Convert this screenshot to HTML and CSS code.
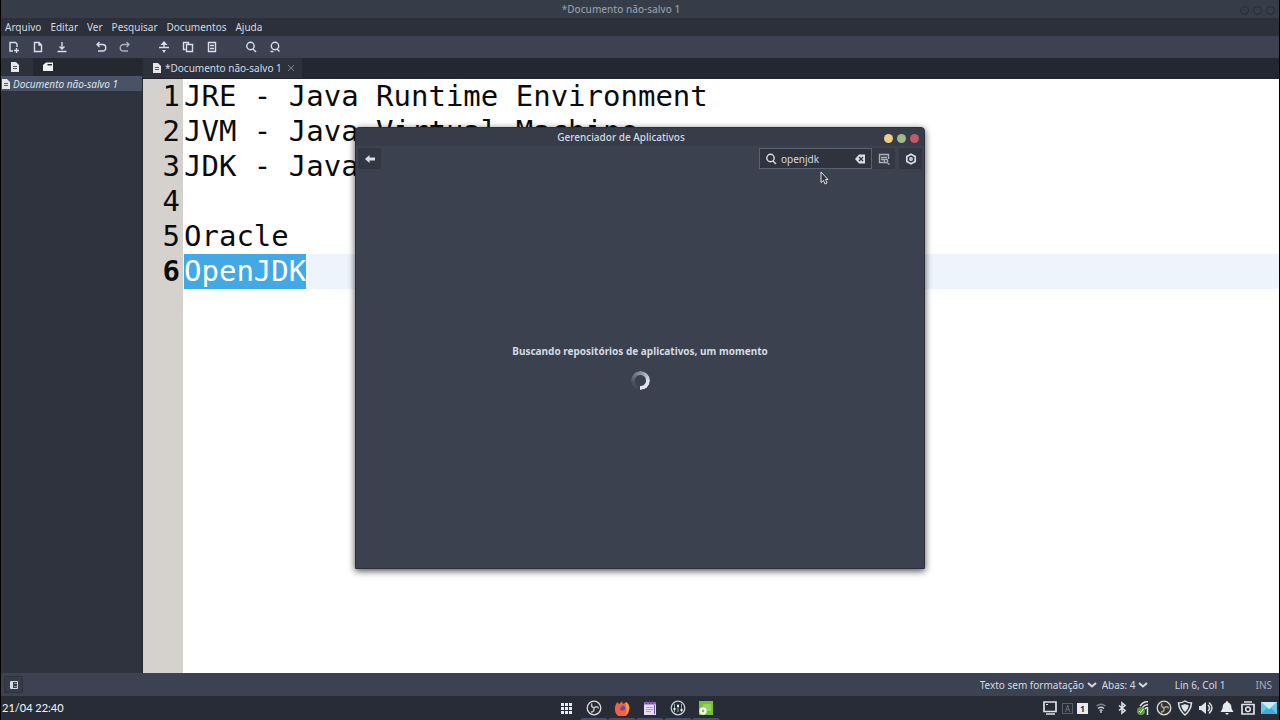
FILE: index.html
```html
<!DOCTYPE html>
<html lang="pt-BR">
<head>
    <meta charset="UTF-8">
    <meta name="viewport" content="width=device-width, initial-scale=1.0">
    <title>*Documento não-salvo 1</title>
    <link rel="stylesheet" href="styles.css">
</head>
<body>
    <svg class="sprite" aria-hidden="true">
        <symbol id="doc" viewBox="0 0 10 12"><path fill="#e4e6e8" d="M1 1h5l3 3v7H1z"/><path stroke="#555b66" d="M3 5.500h4M3 7.500h4"/></symbol>
        <symbol id="chevron" viewBox="0 0 10 6"><path d="M1 1l4 3.500L9 1" fill="none" stroke="#d3dae3" stroke-width="2"/></symbol>
        <symbol id="lens" viewBox="0 0 12 12"><circle cx="5.500" cy="5" r="3.700"/><path d="M8 8l3 3"/></symbol>
    </svg>

    <header class="titlebar">
        <span class="title">*Documento não-salvo 1</span>
        <div class="win-buttons">
            <button aria-label="Minimizar"></button>
            <button aria-label="Maximizar"></button>
            <button aria-label="Fechar"></button>
        </div>
    </header>

    <nav class="menubar">
        <button>Arquivo</button>
        <button>Editar</button>
        <button>Ver</button>
        <button>Pesquisar</button>
        <button>Documentos</button>
        <button>Ajuda</button>
    </nav>

    <div class="toolbar">
        <div class="group">
            <button aria-label="Novo"><svg viewBox="0 0 12 12"><path d="M5 10H2V1.500h5.500L9 3v3M8.500 7v5M6 9.500h5"/></svg></button>
            <button aria-label="Abrir"><svg viewBox="0 0 12 12"><path d="M2.500 1.500H7L9.500 4v6.500h-7zM7 1.500V4h2.500"/></svg></button>
            <button aria-label="Salvar"><svg viewBox="0 0 12 12"><path d="M6 1v7M3.500 5.500L6 8l2.500-2.500M1.500 10.500h9"/></svg></button>
        </div>
        <div class="group">
            <button aria-label="Desfazer"><svg viewBox="0 0 12 12"><path d="M4.500 1L2 3.500 4.500 6M2 3.500h5.500a3 3 0 0 1 0 6.500H3"/></svg></button>
            <button aria-label="Refazer" class="dim"><svg viewBox="0 0 12 12"><path d="M7.500 1L10 3.500 7.500 6M10 3.500H4.500a3 3 0 0 0 0 6.500H9"/></svg></button>
        </div>
        <div class="group">
            <button aria-label="Recortar"><svg viewBox="0 0 12 12"><path class="solid" d="M6 0l3.500 4h-7zM4 9h4l-2 3z"/><path d="M6 3v3M1 6.500h10"/></svg></button>
            <button aria-label="Copiar"><svg viewBox="0 0 12 12"><path d="M3.500 8.500h-2v-7h5v2M4.500 3.500h6v7h-6z"/></svg></button>
            <button aria-label="Colar"><svg viewBox="0 0 12 12"><path d="M2.500 1.500h7v9h-7zM4 4.500h4M4 7.500h4"/></svg></button>
        </div>
        <div class="group">
            <button aria-label="Localizar"><svg viewBox="0 0 12 12"><use href="#lens"/></svg></button>
            <button aria-label="Substituir"><svg viewBox="0 0 12 12"><circle cx="6" cy="5" r="3.700"/><path d="M1.500 10.500h3M8 8l2.500 2.500"/></svg></button>
        </div>
    </div>

    <main class="workspace">
        <aside class="sidebar">
            <div class="side-tabs">
                <button class="active" aria-label="Documentos"><svg viewBox="0 0 10 12"><use href="#doc"/></svg></button>
                <button aria-label="Arquivos"><svg viewBox="0 0 12 12"><path fill="#f1f3f5" d="M1 4l3-2.500h7V10H1z"/><path fill="#232831" d="M5.500 3H10v1.500H5.500z"/></svg></button>
            </div>
            <a class="file" href="#editor"><svg viewBox="0 0 10 12"><use href="#doc"/></svg>Documento não-salvo 1</a>
        </aside>

        <section class="documents">
            <div class="doc-tabs">
                <div class="doc-tab">
                    <svg viewBox="0 0 10 12"><use href="#doc"/></svg>
                    <span>*Documento não-salvo 1</span>
                    <button aria-label="Fechar aba"><svg viewBox="0 0 8 8"><path d="M1 1l6 6M7 1L1 7"/></svg></button>
                </div>
            </div>
            <div class="editor">
                <ol class="lines">
                    <li>1</li>
                    <li>2</li>
                    <li>3</li>
                    <li>4</li>
                    <li>5</li>
                    <li class="current">6</li>
                </ol>
                <textarea id="editor" aria-label="Texto do documento" spellcheck="false">JRE - Java Runtime Environment
JVM - Java Virtual Machine
JDK - Java

Oracle
OpenJDK</textarea>
            </div>
        </section>
    </main>

    <footer class="statusbar">
        <button class="panel-toggle" aria-label="Painel lateral"><svg viewBox="0 0 10 10"><path d="M1.500 1.500h7v7h-7z" fill="none" stroke="#d3dae3"/><path d="M2 2h2v6H2z" fill="#d3dae3"/><path d="M5 3.500h3M5 6.500h3" stroke="#8f97a5"/></svg></button>
        <div class="status-items">
            <div class="pick"><select aria-label="Linguagem"><option>Texto sem formatação</option></select><svg viewBox="0 0 10 6"><use href="#chevron"/></svg></div>
            <div class="pick"><select aria-label="Largura das abas"><option>Abas: 4</option></select><svg viewBox="0 0 10 6"><use href="#chevron"/></svg></div>
            <span class="position">Lin 6, Col 1</span>
            <span class="mode">INS</span>
        </div>
    </footer>

    <div class="taskbar">
        <time class="clock">21/04 22:40</time>
        <div class="apps">
            <button aria-label="Menu"><svg viewBox="0 0 16 16"><path fill="#e8ebef" d="M3 3h3v3H3zM7 3h3v3H7zM11 3h3v3h-3zM3 7h3v3H3zM7 7h3v3H7zM11 7h3v3h-3zM3 11h3v3H3zM7 11h3v3H7zM11 11h3v3h-3z"/></svg></button>
            <button class="open" aria-label="OBS Studio"><svg viewBox="0 0 16 16"><circle cx="8" cy="8" r="6.800" fill="#2b2c30" stroke="#d8dbe0" stroke-width="1.300"/><path d="M8 8C5.500 7 5 5.500 6 3.500M8 8c2-2 4-1.500 4.500.5M8 8c.5 2.500-1 4-3 4" fill="none" stroke="#b9bdc4" stroke-width="1.500"/></svg></button>
            <button class="open" aria-label="Firefox"><svg viewBox="0 0 16 16"><path fill="#f4633c" d="M3 2l2 2 2-1.500L8 1l1 3 3-2c3 2 4 5 3 8a7 7 0 0 1-14 0C.5 6 2 5 3 2z"/><path fill="#ff9d3a" d="M12 2c3 2 4 5 3 8-1 2-2 4-4 4.500 2-3 2-5 1-7z"/><circle cx="8.500" cy="8" r="2.600" fill="#7047b4"/><path fill="#f4633c" d="M4 6l4 .5-2 2z"/></svg></button>
            <button class="open" aria-label="Editor de texto"><svg viewBox="0 0 16 16"><path fill="#e4dcf3" d="M2 2h12v13H2z"/><path fill="#8c5fc4" d="M2 2h12v2.500H2z"/><path stroke="#b49bd9" d="M4 7.500h7M4 9.500h7M4 11.500h5"/><path stroke="#69429c" d="M4.500 1v3M7.500 1v3M10.500 1v3"/><path stroke="#7d55b5" d="M12.500 5v9"/></svg></button>
            <button class="open" aria-label="Ajustes"><svg viewBox="0 0 16 16"><circle cx="8" cy="8" r="6.800" fill="#252c38" stroke="#c6cdd5" stroke-width="1.300"/><path d="M4.500 4v8M8 4v8M11.500 4v8" stroke="#8da4b5"/><path d="M3.500 9h2M7 6h2M10.500 10h2" stroke="#edf1f4" stroke-width="2"/></svg></button>
            <button class="open" aria-label="Gerenciador de Aplicativos"><svg viewBox="0 0 16 16"><path fill="#77bf3d" d="M1 1h14v14H1z"/><path fill="#94d35e" d="M5 4h8v7H5z"/><circle cx="5" cy="11" r="3.700" fill="#f4f7f1"/><circle cx="5" cy="11" r="1.200" fill="#77bf3d"/></svg></button>
        </div>
        <div class="tray">
            <button aria-label="Monitor"><svg viewBox="0 0 16 16"><path d="M2 2h12v9.500H2zM4 14h9" fill="none" stroke="#dfe2e6" stroke-width="1.700"/><path d="M4 4.500h2" stroke="#dfe2e6"/></svg></button>
            <button class="small caps" aria-label="Caps Lock"><span>A</span></button>
            <button class="small num" aria-label="Área de trabalho 1"><span>1</span></button>
            <button aria-label="Rede sem fio"><svg viewBox="0 0 16 16"><path d="M3.500 6q4.500-3.500 9 0" stroke="#77808e" stroke-width="1.400"/><path d="M5 8.500q3-2.500 6 0M6.500 10.500q1.500-1 3 0M8 11v2" stroke="#ccd1d8" stroke-width="1.400"/></svg></button>
            <button aria-label="Bluetooth"><svg viewBox="0 0 16 16"><path d="M5 5.500l6 5-3 2.500V3l3 2.500-6 5" stroke="#dfe2e6" stroke-width="1.600"/></svg></button>
            <button aria-label="Atualizações"><svg viewBox="0 0 16 16"><path d="M5 6q4-5 8-4M7 8q3-4 6-3M10 9q1-2 3-1M12.500 8v7" stroke="#dfe2e6" stroke-width="1.500"/><circle cx="6" cy="11" r="4" fill="#5c9e37"/><path d="M4 11l1.500 1.500L8.500 9" stroke="#fff"/></svg></button>
            <button aria-label="OBS Studio"><svg viewBox="0 0 16 16"><circle cx="8" cy="8" r="6.800" fill="#39332e" stroke="#d9dbdd" stroke-width="1.300"/><path d="M8 8C5.500 7 5 5.500 6 3.500M8 8c2-2 4-1.500 4.500.5M8 8c.5 2.500-1 4-3 4" stroke="#aaa59e" stroke-width="1.500"/></svg></button>
            <button aria-label="Segurança"><svg viewBox="0 0 16 16"><path d="M8 1q3 2 6.500 2Q14 10 8 15 2 10 1.500 3 5 3 8 1z" stroke="#dfe2e6" stroke-width="1.500"/><path d="M8 4q2 1 3.700 1-.2 4-3.700 7-3.500-3-3.700-7Q6 5 8 4z" fill="#dfe2e6"/></svg></button>
            <button aria-label="Volume"><svg viewBox="0 0 16 16"><path d="M1 6h2l5-4v12l-5-4H1z" fill="#dfe2e6"/><path d="M10 5q3 3 0 6M11 2.500q6 5.500 0 11" stroke="#dfe2e6" stroke-width="1.500"/></svg></button>
            <button aria-label="Notificações"><svg viewBox="0 0 16 16"><path d="M8 1q1.200 0 1.200 1.500 3.300 1 3.300 6L14.500 12h-13l2-3.500q0-5 3.300-6Q6.800 1 8 1zM6 13h4l-2 2z" fill="#e8eaed"/></svg></button>
            <button aria-label="Captura de tela"><svg viewBox="0 0 16 16"><path d="M2 4.500h12V14H2zM4 2h8" stroke="#dfe2e6" stroke-width="1.700"/><circle cx="8" cy="9.300" r="2.300" stroke="#dfe2e6" stroke-width="1.500"/></svg></button>
            <button aria-label="E-mail"><svg viewBox="0 0 16 16"><path d="M0 2h16v12H0z" fill="#65c6ec"/><path d="M0 2h16L8 9z" fill="#c9edfa"/><path d="M0 14l6-6 2 2 2-2 6 6z" fill="#3fa9d8"/></svg></button>
        </div>
    </div>

    <div class="app-window" role="dialog" aria-labelledby="appTitle">
        <div class="app-title">
            <span id="appTitle">Gerenciador de Aplicativos</span>
            <div class="lights">
                <button class="yellow" aria-label="Minimizar"></button>
                <button class="green" aria-label="Maximizar"></button>
                <button class="red" aria-label="Fechar"></button>
            </div>
        </div>
        <div class="app-bar">
            <button class="square" aria-label="Voltar"><svg viewBox="0 0 12 12"><path class="solid" d="M1 6l4.500-4v2.500H11v3H5.500V10z"/></svg></button>
            <div class="app-tools">
                <div class="search">
                    <svg viewBox="0 0 12 12"><use href="#lens"/></svg>
                    <input type="text" id="search" aria-label="Pesquisar aplicativos" value="openjdk">
                    <button aria-label="Limpar"><svg viewBox="0 0 12 12"><path class="solid" d="M1 6l4-4.500h6v9H5z"/><path d="M5 4l4 4M9 4L5 8" class="cross"/></svg></button>
                </div>
                <button class="square dim" aria-label="Pesquisa detalhada"><svg viewBox="0 0 12 12"><path d="M7 9.500H1.500v-8h9V6M3 4.500h6M3 6.500h3M9.500 10l2 1.500"/><circle cx="8" cy="8" r="1.700"/></svg></button>
                <button class="square settings" aria-label="Opções"><svg viewBox="0 0 12 12"><path d="M6 1.200l4.200 2.400v4.800L6 10.800 1.800 8.400V3.600z" stroke-width="1.700"/><circle cx="6" cy="6" r="1.200"/></svg></button>
            </div>
        </div>
        <div class="app-body">
            <p>Buscando repositórios de aplicativos, um momento</p>
            <div class="spinner" role="progressbar" aria-label="Buscando"></div>
        </div>
    </div>

    <svg class="pointer" viewBox="0 0 9 14" aria-hidden="true"><path d="M1 1v10.500l2.500-2 1.500 3.500 2-1-1.500-3.500H8z" fill="#30343d" stroke="#dfe2e6"/></svg>

    <script>
        const editor = document.getElementById('editor');
        const word = 'OpenJDK';
        const start = editor.value.indexOf(word);

        editor.focus();
        editor.setSelectionRange(start, start + word.length);
    </script>
</body>
</html>
```

FILE: styles.css
```css
* {
    box-sizing: border-box;
}

body {
    margin: 0;
    min-height: 100vh;
    display: flex;
    flex-direction: column;
    border: solid #000;
    border-width: 0 1px;
    background: #2f343f;
    color: #d3dae3;
    font: 10px/14px "Noto Sans", sans-serif;
}

button,
input,
select {
    margin: 0;
    padding: 0;
    border: none;
    background: none;
    color: inherit;
    font: inherit;
}

svg {
    display: block;
    flex: none;
    fill: none;
}

.sprite {
    position: absolute;
    width: 0;
    height: 0;
}

/* Barra de título */
.titlebar {
    display: grid;
    grid-template-columns: 1fr auto 1fr;
    align-items: center;
    height: 18px;
    background: #363c48;
    color: #9299a6;
}

.title {
    grid-column: 2;
    padding-right: 38px;
    font-weight: 500;
}

.win-buttons {
    display: flex;
    justify-content: flex-end;
    gap: 4px;
    padding: 3px 4px 0 0;
}

.win-buttons button {
    width: 9px;
    height: 9px;
    border: 1px solid #272d38;
    border-radius: 50%;
}

/* Menu e ferramentas */
.menubar {
    display: flex;
    align-items: center;
    gap: 9px;
    height: 18px;
    padding-left: 4px;
    background: #2b303b;
}

.toolbar {
    display: flex;
    align-items: center;
    gap: 15px;
    height: 22px;
    padding-left: 1px;
    background: #3c4252;
}

.group {
    display: flex;
}

.group button {
    display: grid;
    place-items: center;
    width: 24px;
    height: 22px;
}

.group svg,
.app-bar svg {
    width: 12px;
    height: 12px;
    stroke: #d8dee8;
    stroke-width: 1.4;
}

.dim {
    opacity: 0.7;
}

.group .solid,
.app-bar .solid {
    fill: #d8dee8;
    stroke: none;
}

.app-bar .cross {
    stroke: #2f343f;
}

/* Painel lateral */
.workspace {
    flex: 1;
    display: flex;
    background: #2e333e;
}

.sidebar {
    width: 142px;
    flex: none;
    border-right: 1px solid #252a33;
}

.side-tabs {
    display: flex;
    height: 18px;
    background: #232831;
}

.side-tabs button {
    display: grid;
    place-items: center;
    width: 33px;
    padding-right: 4px;
}

.side-tabs .active {
    width: 32px;
    background: #2c313c;
}

.side-tabs svg {
    width: 12px;
    height: 12px;
}

.file {
    display: flex;
    align-items: center;
    height: 15px;
    gap: 2px;
    background: #4a5265;
    color: #dde2ea;
    font-style: italic;
    text-decoration: none;
}

.file svg,
.doc-tab > svg {
    width: 10px;
    height: 12px;
}

/* Documento */
.documents {
    flex: 1;
    display: flex;
    flex-direction: column;
}

.doc-tabs {
    display: flex;
    height: 21px;
    background: #222731;
    border-bottom: 1px solid #20242d;
}

.doc-tab {
    display: flex;
    align-items: center;
    gap: 3px;
    padding: 0 7px 0 9px;
    background: #2c313c;
}

.doc-tab button {
    margin-left: 2px;
}

.doc-tab button svg {
    width: 8px;
    height: 8px;
    stroke: #7a818e;
}

.editor {
    flex: 1;
    display: flex;
    background: #fff;
    color: #0b0b0b;
    font: 29px/35px "DejaVu Sans Mono", monospace;
}

.lines {
    width: 40px;
    margin: 0;
    padding: 0 3px 0 0;
    background: #d5d1cd;
    list-style: none;
    text-align: right;
}

.lines .current {
    font-weight: bold;
}

textarea {
    flex: 1;
    margin: 0;
    padding: 0 1px;
    border: none;
    outline: none;
    resize: none;
    background: linear-gradient(#edf4fc, #edf4fc) 0 175px / 100% 35px no-repeat;
    color: inherit;
    font: inherit;
    caret-color: transparent;
}

textarea::selection {
    background: #43a9e5;
    color: #fff;
}

/* Barra de status */
.statusbar {
    display: flex;
    justify-content: space-between;
    align-items: center;
    height: 23px;
    padding: 0 7px 0 3px;
    background: #3c4252;
}

.panel-toggle {
    display: grid;
    place-items: center;
    width: 19px;
    height: 17px;
    border: 1px solid #2d323d;
    background: #353b48;
}

.panel-toggle svg {
    width: 10px;
    height: 10px;
}

.status-items,
.pick {
    display: flex;
    align-items: center;
}

.pick {
    gap: 2px;
    margin-right: 5px;
}

.pick select {
    appearance: none;
}

.pick svg {
    width: 10px;
    height: 6px;
}

.position {
    margin-left: 22px;
}

.mode {
    margin-left: 30px;
    color: #a7afbb;
}

/* Barra de tarefas */
.taskbar {
    display: grid;
    grid-template-columns: 1fr auto 1fr;
    height: 24px;
    background: #272c36;
}

.clock {
    align-self: center;
    padding-left: 1px;
    color: #eceff3;
    font-family: Lato, sans-serif;
    font-size: 11px;
    font-weight: 500;
}

.apps {
    display: flex;
    padding-right: 8px;
}

.apps button {
    display: grid;
    place-items: center;
    width: 28px;
    border: solid transparent;
    border-width: 1px 2px 2px;
    background-clip: padding-box;
}

.apps .open {
    border-bottom-color: #465067;
}

.apps svg,
.tray svg {
    width: 16px;
    height: 16px;
}

.tray {
    display: flex;
    justify-content: flex-end;
}

.tray button {
    display: grid;
    place-items: center;
    width: 21px;
}

.tray .small {
    width: 15px;
}

.tray span {
    width: 11px;
    height: 11px;
    border: 1px solid #59606c;
    color: #7b828e;
    font-size: 8px;
    line-height: 9px;
}

.tray .num span {
    border-color: #e8ebef;
    background: #e8ebef;
    color: #20242c;
    font-weight: bold;
}

/* Janela do gerenciador */
.app-window {
    position: absolute;
    top: 127px;
    left: 355px;
    display: flex;
    flex-direction: column;
    width: 570px;
    height: 442px;
    border: 1px solid #2b303b;
    border-radius: 4px 4px 1px 1px;
    background: #3c4150;
    box-shadow: 0 2px 7px rgba(0, 0, 0, 0.7);
}

.app-title {
    display: grid;
    grid-template-columns: 1fr auto 1fr;
    align-items: center;
    height: 18px;
    border-radius: 3px 3px 0 0;
    background: #363c48;
    font-weight: 500;
}

.app-title span {
    grid-column: 2;
    padding-right: 38px;
}

.lights {
    display: flex;
    justify-content: flex-end;
    gap: 4px;
    padding: 3px 5px 0 0;
}

.lights button {
    width: 9px;
    height: 9px;
    border-radius: 50%;
}

.yellow {
    background: #f0cd84;
}

.green {
    background: #a2ba8a;
}

.red {
    background: #bd5c66;
}

.app-bar {
    display: flex;
    justify-content: space-between;
    padding: 2px 2px 0;
}

.app-tools {
    display: flex;
}

.square {
    display: grid;
    place-items: center;
    width: 23px;
    height: 21px;
    border: 1px solid #303540;
    border-radius: 2px;
    background: #323743;
}

.settings {
    margin-left: 4px;
}

.search {
    display: flex;
    align-items: center;
    gap: 4px;
    width: 113px;
    height: 21px;
    padding: 0 5px;
    border: 1px solid #596172;
    background: #2e333e;
}

.search input {
    flex: 1;
    min-width: 0;
    outline: none;
}

.app-body {
    flex: 1;
    display: flex;
    flex-direction: column;
    align-items: center;
    justify-content: center;
    gap: 13px;
    padding-bottom: 4px;
}

.app-body p {
    margin: 0;
    font-weight: bold;
}

.spinner {
    width: 19px;
    height: 19px;
    border-radius: 50%;
    background: conic-gradient(from 185deg, #3c4150, #4b5162 20%, #8d94a3 50%, #dfe4ee 75%, #dfe4ee);
    mask: radial-gradient(circle, transparent 5px, #000 6px);
}

.pointer {
    position: absolute;
    top: 171px;
    left: 820px;
    width: 9px;
    height: 14px;
}
```
